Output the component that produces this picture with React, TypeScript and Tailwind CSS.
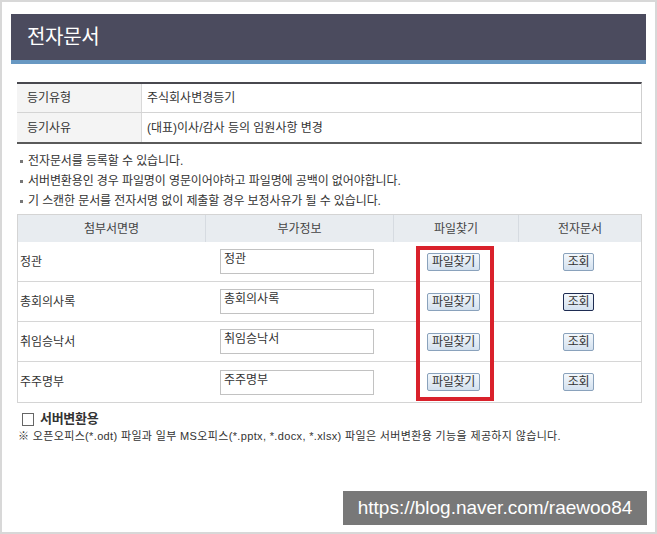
const font = { fontFamily: '"Liberation Sans", "Noto Sans CJK KR", sans-serif' }

const rows = [
  { name: '정관', info: '정관' },
  { name: '총회의사록', info: '총회의사록' },
  { name: '취임승낙서', info: '취임승낙서' },
  { name: '주주명부', info: '주주명부' },
]

const notes = [
  '전자문서를 등록할 수 있습니다.',
  '서버변환용인 경우 파일명이 영문이어야하고 파일명에 공백이 없어야합니다.',
  '기 스캔한 문서를 전자서명 없이 제출할 경우 보정사유가 될 수 있습니다.',
]

function SmallButton({ label, focused }: { label: string; focused?: boolean }) {
  return (
    <button
      className={
        'h-[18px] px-[4px] rounded-[2px] border bg-gradient-to-b from-[#f4f8fc] to-[#d3e0ee] text-[12px] leading-[16px] text-[#333] tracking-[-0.3px] ' +
        (focused ? 'border-[#1e2c52]' : 'border-[#8aa2bc]')
      }
    >
      {label}
    </button>
  )
}

export default function App() {
  return (
    <div style={font} className="w-[657px] h-[534px] border-2 border-[#d8d8d8] bg-white px-[9px] pt-[12px] relative text-[#333]">
      <div className="h-[50px] bg-[#4b4b5e] border-b-4 border-[#6898c2] flex items-center pl-[16px]">
        <h1 className="text-[20px] text-white tracking-[-0.3px]">전자문서</h1>
      </div>

      <div className="ml-[6px] w-[625px] mt-[18px] border-t-2 border-b-2 border-t-[#48484f] border-b-[#5a5a5a] border-r border-r-[#cfcfcf] text-[12px]">
        <div className="flex h-[29px] border-b border-[#d4d4d4]">
          <div className="w-[125px] bg-[#f4f4f4] border-r border-[#d9d9d9] pl-[10px] flex items-center">등기유형</div>
          <div className="pl-[5px] flex items-center">주식회사변경등기</div>
        </div>
        <div className="flex h-[29px]">
          <div className="w-[125px] bg-[#f4f4f4] border-r border-[#d9d9d9] pl-[10px] flex items-center">등기사유</div>
          <div className="pl-[5px] flex items-center">(대표)이사/감사 등의 임원사항 변경</div>
        </div>
      </div>

      <ul className="mt-[7px] ml-[9px] text-[12px] tracking-[-0.1px] text-[#333]">
        {notes.map(n => (
          <li key={n} className="h-[20px] flex items-center gap-[5px]">
            <span className="w-[3px] h-[3px] bg-[#777]" />
            {n}
          </li>
        ))}
      </ul>

      <div className="relative ml-[6px] w-[625px] mt-[3px] border border-[#d4d4d4] text-[12px]">
        <div className="grid grid-cols-[188px_188px_125px_122px] h-[27px] bg-[#e8ecf0] text-[#444]">
          <div className="flex items-center justify-center border-r border-[#d6dbe1]">첨부서면명</div>
          <div className="flex items-center justify-center border-r border-[#d6dbe1]">부가정보</div>
          <div className="flex items-center justify-center border-r border-[#d6dbe1]">파일찾기</div>
          <div className="flex items-center justify-center">전자문서</div>
        </div>
        {rows.map((r, i) => (
          <div
            key={r.name}
            className={'grid grid-cols-[188px_188px_125px_122px] h-[40px] ' + (i < rows.length - 1 ? 'border-b border-[#d6d6d6]' : '')}
          >
            <div className="flex items-center pl-[2px]">{r.name}</div>
            <div className="flex items-center pl-[14px]">
              <div className="w-[154px] h-[25px] border border-[#c2c2c2] px-[3px] pt-[2px] leading-[14px]">{r.info}</div>
            </div>
            <div className="flex items-center justify-center pr-[6px]">
              <SmallButton label="파일찾기" />
            </div>
            <div className="flex items-center justify-center pr-[3px]">
              <SmallButton label="조회" focused={i === 1} />
            </div>
          </div>
        ))}
        <div className="absolute left-[398px] top-[31px] w-[78px] h-[155px] border-4 border-[#d9212b]" />
      </div>

      <div className="mt-[8px] ml-[11px] flex items-center gap-[6px] h-[16px]">
        <span className="w-[12px] h-[13px] border border-[#666] bg-white" />
        <span className="text-[13px] font-bold text-[#333] tracking-[-0.3px]">서버변환용</span>
      </div>
      <p className="ml-[7px] mt-[1px] text-[11px] tracking-[0.35px] text-[#333]">
        ※ 오픈오피스(*.odt) 파일과 일부 MS오피스(*.pptx, *.docx, *.xlsx) 파일은 서버변환용 기능을 제공하지 않습니다.
      </p>

      <div className="absolute left-[341px] top-[489px] w-[304px] h-[34px] bg-[#787878] flex items-center justify-center">
        <span className="text-[19px] text-white">https://blog.naver.com/raewoo84</span>
      </div>
    </div>
  )
}
